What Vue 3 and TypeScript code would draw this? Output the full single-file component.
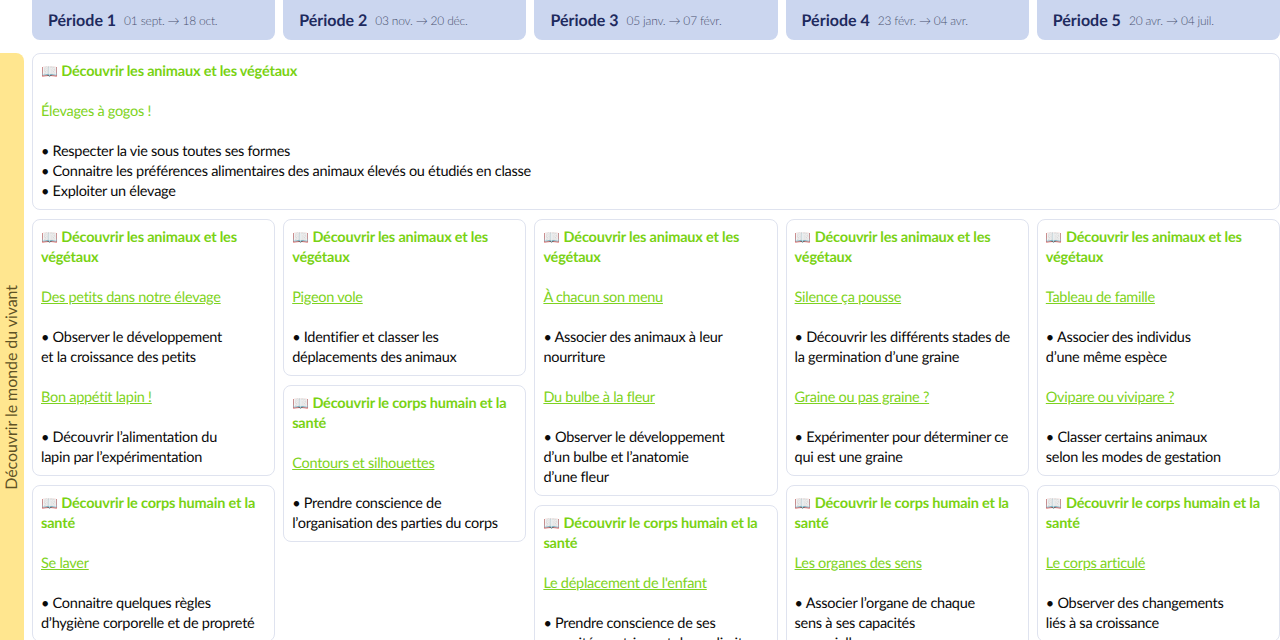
<script setup lang="ts">
interface Block { link: string; lines: string[] }
interface Card { heading: string; blocks: Block[] }
const animals = 'Découvrir les animaux et les végétaux'
const body = 'Découvrir le corps humain et la santé'
const periods = [
  { name: 'Période 1', dates: '01 sept. → 18 oct.' },
  { name: 'Période 2', dates: '03 nov. → 20 déc.' },
  { name: 'Période 3', dates: '05 janv. → 07 févr.' },
  { name: 'Période 4', dates: '23 févr. → 04 avr.' },
  { name: 'Période 5', dates: '20 avr. → 04 juil.' },
]
const mk = (l: string, ...lines: string[]): Block => ({ link: l, lines })
const columns: Card[][] = [
  [
    { heading: animals, blocks: [
      mk('Des petits dans notre élevage', '• Observer le développement', 'et la croissance des petits'),
      mk('Bon appétit lapin !', '• Découvrir l’alimentation du', 'lapin par l’expérimentation'),
    ] },
    { heading: body, blocks: [mk('Se laver', '• Connaitre quelques règles', 'd’hygiène corporelle et de propreté')] },
  ],
  [
    { heading: animals, blocks: [mk('Pigeon vole', '• Identifier et classer les', 'déplacements des animaux')] },
    { heading: body, blocks: [mk('Contours et silhouettes', '• Prendre conscience de', 'l’organisation des parties du corps')] },
  ],
  [
    { heading: animals, blocks: [
      mk('À chacun son menu', '• Associer des animaux à leur', 'nourriture'),
      mk('Du bulbe à la fleur', '• Observer le développement', 'd’un bulbe et l’anatomie', 'd’une fleur'),
    ] },
    { heading: body, blocks: [mk('Le déplacement de l\'enfant', '• Prendre conscience de ses', 'capacités motrices et de ses limites')] },
  ],
  [
    { heading: animals, blocks: [
      mk('Silence ça pousse', '• Découvrir les différents stades de', 'la germination d’une graine'),
      mk('Graine ou pas graine ?', '• Expérimenter pour déterminer ce', 'qui est une graine'),
    ] },
    { heading: body, blocks: [mk('Les organes des sens', '• Associer l’organe de chaque', 'sens à ses capacités', 'sensorielles')] },
  ],
  [
    { heading: animals, blocks: [
      mk('Tableau de famille', '• Associer des individus', 'd’une même espèce'),
      mk('Ovipare ou vivipare ?', '• Classer certains animaux', 'selon les modes de gestation'),
    ] },
    { heading: body, blocks: [mk('Le corps articulé', '• Observer des changements', 'liés à sa croissance')] },
  ],
]
</script>

<template>
  <div class="page">
    <header class="periods">
      <div v-for="p in periods" :key="p.name" class="period">
        <span class="pname">{{ p.name }}</span>
        <span class="pdates">{{ p.dates }}</span>
      </div>
    </header>
    <div class="main">
      <aside class="domain"><span>Découvrir le monde du vivant</span></aside>
      <div class="content">
        <section class="card">
          <h3 class="heading"><span class="emoji">📖</span> {{ animals }}</h3>
          <p class="gap sub">Élevages à gogos !</p>
          <ul class="list gap">
            <li>• Respecter la vie sous toutes ses formes</li>
            <li>• Connaitre les préférences alimentaires des animaux élevés ou étudiés en classe</li>
            <li>• Exploiter un élevage</li>
          </ul>
        </section>
        <div class="cols">
          <div v-for="(col, i) in columns" :key="i" class="col">
            <section v-for="(card, j) in col" :key="j" class="card">
              <h3 class="heading"><span class="emoji">📖</span> {{ card.heading }}</h3>
              <div v-for="(b, k) in card.blocks" :key="k" class="block">
                <a class="link gap">{{ b.link }}</a>
                <ul class="list gap">
                  <li v-for="l in b.lines" :key="l">{{ l }}</li>
                </ul>
              </div>
            </section>
          </div>
        </div>
      </div>
    </div>
  </div>
</template>

<style>
html, body { margin: 0; overflow: hidden; background: #fff; }
</style>

<style scoped>
.page {
  width: 1280px;
  height: 640px;
  overflow: hidden;
  font-family: Lato, "Noto Sans", sans-serif;
  font-size: 14.5px;
  line-height: 20px;
  letter-spacing: -0.27px;
  color: #0a0a0a;
  background: #fff;
  text-rendering: geometricPrecision;
}
.periods {
  display: grid;
  grid-template-columns: repeat(5, 1fr);
  gap: 8px;
  margin-left: 32px;
  height: 40px;
}
.period {
  display: flex;
  align-items: center;
  gap: 8px;
  padding: 1px 16px 0;
  background: #cbd6ef;
  border-radius: 0 0 8px 8px;
}
.pname { font-size: 16px; font-weight: 700; color: #1e2a5e; letter-spacing: 0; }
.pdates { font-size: 12px; font-weight: 300; color: #4a5270; letter-spacing: -0.2px; }
.main {
  display: flex;
  gap: 8px;
  margin-top: 13px;
}
.domain {
  width: 24px;
  height: 668px;
  flex: none;
  background: #ffe68f;
  border-radius: 0 8px 8px 0;
  display: flex;
  align-items: center;
  justify-content: center;
}
.domain span {
  writing-mode: vertical-rl;
  transform: rotate(180deg);
  font-size: 16px;
  letter-spacing: -0.07px;
  color: #5f5326;
  white-space: nowrap;
}
.content {
  flex: 1;
  min-width: 0;
  display: flex;
  flex-direction: column;
  gap: 9px;
}
.cols {
  display: grid;
  grid-template-columns: repeat(5, 1fr);
  gap: 8px;
  align-items: start;
}
.col {
  display: flex;
  flex-direction: column;
  gap: 9px;
}
.card {
  border: 1px solid #dfe3ef;
  border-radius: 8px;
  padding: 8px 8px 7px;
  background: #fff;
}
.heading {
  margin: 0;
  font-size: inherit;
  font-weight: 700;
  line-height: inherit;
  letter-spacing: -0.19px;
  color: #79d213;
}
.emoji { font-size: 13.7px; line-height: 0; }
.gap { display: block; margin: 20px 0 0; padding: 0; }
.sub { color: #7ed321; }
.link { color: #7ed321; text-decoration: underline; }
.list { list-style: none; }
</style>
